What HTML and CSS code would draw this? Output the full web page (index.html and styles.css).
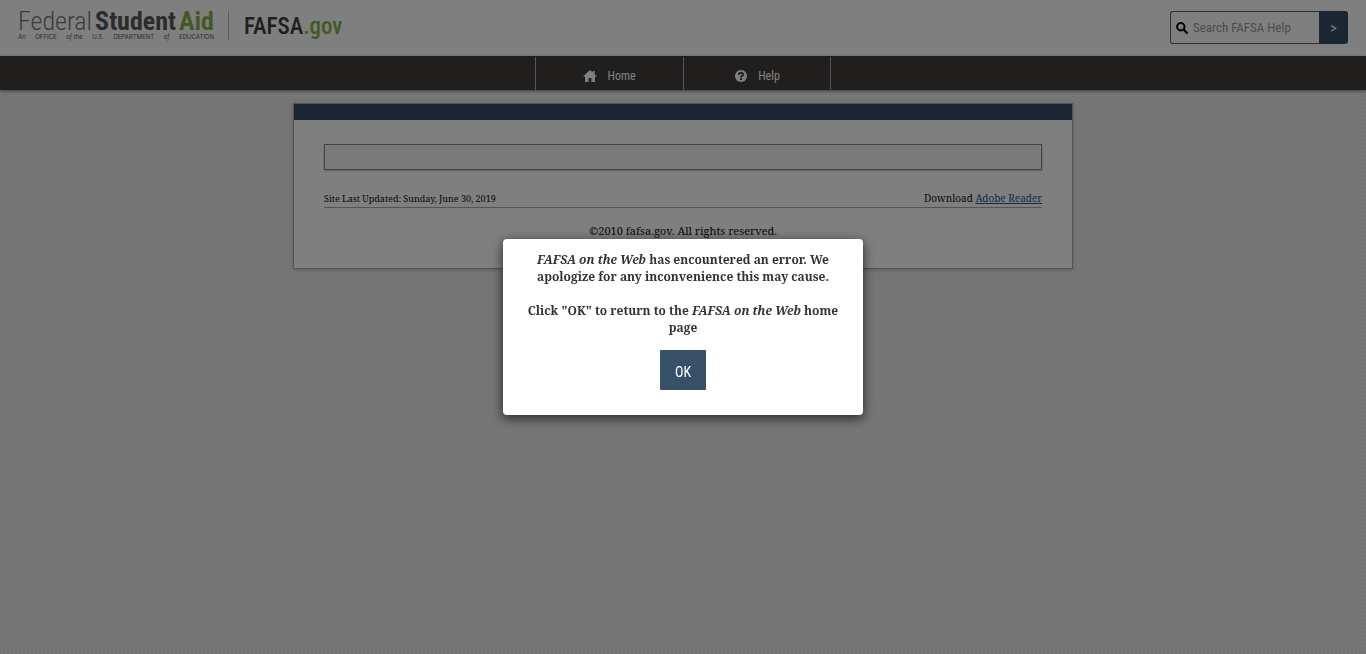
FILE: index.html
```html
<!DOCTYPE html>
<html lang="en">
<head>
<meta charset="utf-8">
<title>FAFSA.gov</title>
<link rel="stylesheet" href="styles.css">
</head>
<body>
<header class="banner">
  <div class="brand">
    <div class="fsa">
      <div class="fsa-name"><span class="light">Federal</span><b class="dark">Student</b><b class="green">Aid</b></div>
      <div class="fsa-tag"><i>An</i> <span>OFFICE</span> <i>of the</i> <span>U.S.</span> <span>DEPARTMENT</span> <i>of</i> <span>EDUCATION</span></div>
    </div>
    <div class="site-name">FAFSA<span class="green">.gov</span></div>
  </div>
  <form class="search">
    <label class="search-field">
      <svg class="search-icon" viewBox="0 0 12 12" aria-label="Search"><circle cx="4.8" cy="4.8" r="3.7" fill="none" stroke="currentColor" stroke-width="2"/><path d="M7.6 7.6 11 11" stroke="currentColor" stroke-width="2.2" stroke-linecap="round"/></svg>
      <input class="search-input" type="text" placeholder="Search FAFSA Help">
    </label>
    <button class="search-go" type="button">&gt;</button>
  </form>
</header>
<nav class="menu">
  <a class="menu-item" href="#"><svg class="menu-icon" viewBox="0 0 14 12"><path d="M7 0 0 6.500h2V12h3.600V8h2.800v4H12V6.500h2L11.600 4.200V1H9.800v1.600z" fill="currentColor"/></svg><span>Home</span></a>
  <a class="menu-item" href="#"><svg class="menu-icon" viewBox="0 0 14 12"><circle cx="7" cy="6" r="6" fill="currentColor"/><path d="M4.800 4.700C4.800 2.100 9.200 2.100 9.200 4.500 9.200 5.900 7 5.800 7 7.500" fill="none" stroke="#403e3c" stroke-width="1.900"/><path d="M6 8.300h2v1.700H6z" fill="#403e3c"/></svg><span>Help</span></a>
</nav>
<main class="panel">
  <div class="panel-head"></div>
  <div class="panel-body">
    <div class="notice"></div>
    <div class="meta">
      <span class="updated">Site Last Updated: Sunday, June 30, 2019</span>
      <span>Download <a class="link" href="#">Adobe Reader</a></span>
    </div>
    <p class="copyright">©2010 fafsa.gov. All rights reserved.</p>
  </div>
</main>
<div class="overlay">
  <div class="modal" role="alertdialog" aria-modal="true" aria-labelledby="message">
    <div id="message">
      <p class="message"><i>FAFSA on the Web</i> has encountered an error. We apologize for any inconvenience this may cause.</p>
      <p class="message">Click "OK" to return to the <i>FAFSA on the Web</i> home page</p>
    </div>
    <button class="ok" type="button">OK</button>
  </div>
</div>
</body>
</html>
```
FILE: styles.css
```css
:root {
  --serif: "Droid Serif", "Noto Serif", "DejaVu Serif Condensed", "Liberation Serif", serif;
  --narrow: "Roboto Condensed", "Liberation Sans Narrow", Roboto, sans-serif;
  --blue: #365068;
}
* { box-sizing: border-box; }
body {
  margin: 0;
  min-height: 100vh;
  font-family: var(--serif);
  color: #333;
  background: linear-gradient(135deg, #e2e2e2 25%, #f2f2f2 25% 50%, #e2e2e2 50% 75%, #f2f2f2 75%) 0 0 / 4px 4px;
}
.banner {
  display: flex;
  justify-content: space-between;
  align-items: flex-start;
  height: 56px;
  padding: 11px 18px 0;
  background: #fff;
}
.brand { display: flex; font-family: var(--narrow); }
.fsa { padding-right: 14px; border-right: 1px solid #bbb; height: 29px; }
.fsa-name { display: flex; gap: 3px; font-size: 26px; line-height: 20px; }
.fsa-tag {
  display: flex;
  justify-content: space-between;
  font: 6px/12px Inter, "Liberation Sans", sans-serif;
  color: #555;
  white-space: nowrap;
}
.light { color: #777; font-weight: 300; }
.dark { color: #595959; }
.green { color: #88b04b; }
.site-name { padding-left: 15px; font-size: 23px; line-height: 31px; font-weight: 500; color: #404040; }
.search { display: flex; height: 33px; width: 178px; }
.search-field {
  display: flex;
  align-items: center;
  flex: 1;
  min-width: 0;
  gap: 5px;
  padding-left: 5px;
  border: 1px solid #666;
  border-right: 0;
  border-radius: 3px 0 0 3px;
}
.search-icon { width: 12px; height: 12px; flex: none; color: #000; }
.search-input {
  flex: 1;
  min-width: 0;
  width: 100%;
  padding: 0;
  border: 0;
  outline: 0;
  background: transparent;
  font: 13px var(--narrow);
}
.search-input::placeholder { color: #999; }
.search-go {
  flex: none;
  width: 29px;
  padding: 0;
  border: 0;
  border-radius: 0 3px 3px 0;
  background: var(--blue);
  color: #fff;
  font: 14px var(--narrow);
}
.menu {
  display: flex;
  justify-content: center;
  height: 34px;
  padding-top: 1px;
  background: #403e3c;
  box-shadow: 0 1px 3px #777;
}
.menu-item {
  display: flex;
  justify-content: center;
  align-items: center;
  gap: 10px;
  width: 148px;
  padding-top: 4px;
  border-left: 1px solid #aaa;
  color: #fff;
  font: 12px var(--narrow);
  text-decoration: none;
}
.menu-item:last-child { border-right: 1px solid #aaa; }
.menu-icon { width: 14px; height: 12px; }
.panel {
  max-width: 780px;
  margin: 13px auto;
  border: 1px solid #aaa;
  background: #fff;
  box-shadow: 0 1px 3px #bbb;
}
.panel-head { height: 16px; background: var(--blue); }
.panel-body { padding: 24px 30px; }
.notice { height: 26px; border: 1px solid #888; background: #f5f4f0; box-shadow: 0 1px 2px #bbb; }
.meta {
  display: flex;
  justify-content: space-between;
  align-items: baseline;
  margin-top: 20px;
  border-bottom: 1px solid #aaa;
  color: #111;
  font-size: 10px;
  line-height: 16px;
}
.updated { font-size: 9px; }
.link { color: #17618c; }
.copyright { margin: 15px 0 6px; text-align: center; font-size: 11px; line-height: 15px; color: #111; }
.overlay {
  position: fixed;
  inset: 0;
  display: flex;
  justify-content: center;
  align-items: center;
  background: rgba(0, 0, 0, 0.5);
}
.modal {
  width: 360px;
  padding: 12px 20px 25px;
  border-radius: 4px;
  background: #fff;
  box-shadow: 0 3px 12px rgba(0, 0, 0, 0.7);
  text-align: center;
}
.message { margin: 0 0 17px; font-size: 12px; line-height: 17px; font-weight: bold; }
.message:last-child { margin-bottom: 14px; }
.ok {
  display: block;
  width: 46px;
  height: 40px;
  margin: 0 auto;
  padding: 4px 0 0;
  border: 0;
  border-radius: 1px;
  background: var(--blue);
  color: #fff;
  font: 14px var(--narrow);
}
```
